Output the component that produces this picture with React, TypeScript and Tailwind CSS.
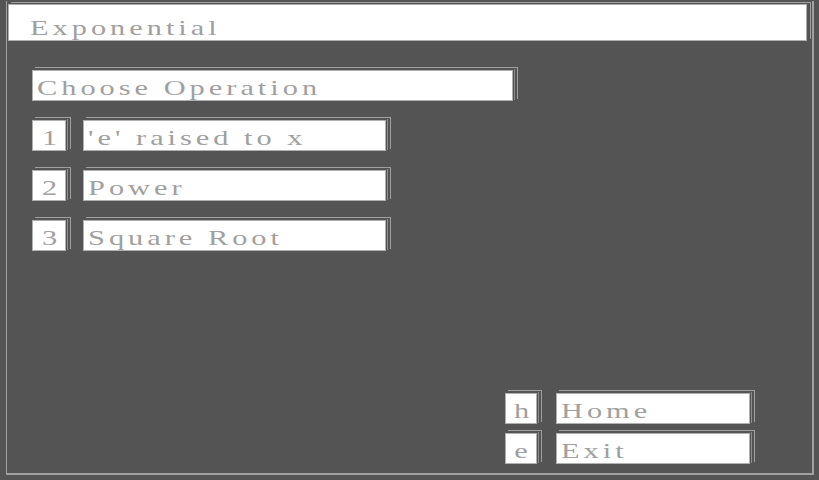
import { ReactNode } from "react";

type BoxProps = {
  children: ReactNode;
  size: string;
  center?: boolean;
};

// wide, spaced-out lettering like the old terminal font
function Label({ children, center }: { children: ReactNode; center?: boolean }) {
  return (
    <span
      className={`inline-block scale-x-[1.38] ${center ? "origin-center" : "origin-left tracking-[2.9px]"}`}
    >
      {children}
    </span>
  );
}

// white panel with the little 3d lip on top and right
function Bevel({ children, size, center }: BoxProps) {
  return (
    <div className={`relative shrink-0 ${size}`}>
      <div className="absolute -top-[3px] left-[3px] -right-[5px] bottom-[2px] border-t border-r border-[#a0a0a0]" />
      <div className="absolute -top-[1px] left-[1px] -right-[2px] bottom-[1px] border-r border-[#8c8c8c]" />
      <div
        className={`relative h-full overflow-hidden whitespace-pre border border-[#b0b0b0] bg-white pt-[4px] text-[22px] leading-[26px] text-[#a0a0a0] ${center ? "text-center" : "pl-[4px]"}`}
      >
        <Label center={center}>{children}</Label>
      </div>
    </div>
  );
}

const operations = [
  { key: "1", label: "'e' raised to x" },
  { key: "2", label: "Power" },
  { key: "3", label: "Square Root" },
];

const navKeys = [
  { key: "h", label: "Home" },
  { key: "e", label: "Exit" },
];

export default function App() {
  return (
    <div
      className="h-[480px] w-[819px] overflow-hidden bg-[#545454] pt-[1px]"
      style={{ fontFamily: '"Liberation Serif", "Times New Roman", serif' }}
    >
      <div className="ml-[6px] flex h-[474px] w-[808px] flex-col border-r-2 border-b-2 border-l border-[#a0a0a0]">
        <div className="relative ml-[1px] mt-[3px] h-[37px] w-[799px]">
          <div className="absolute -top-[2px] left-[3px] -right-[4px] bottom-[2px] border-t border-r border-[#a0a0a0]" />
          <div className="relative h-full whitespace-pre border border-[#b0b0b0] bg-white pl-[21px] pt-[10px] text-[22px] leading-[26px] text-[#a0a0a0]">
            <Label>Exponential</Label>
          </div>
        </div>

        <div className="ml-[25px] mt-[29px] flex flex-col gap-[19px]">
          <Bevel size="h-[31px] w-[481px]">Choose Operation</Bevel>
          {operations.map((op) => (
            <div key={op.key} className="flex gap-[17px]">
              <Bevel size="h-[31px] w-[34px]" center>
                {op.key}
              </Bevel>
              <Bevel size="h-[31px] w-[303px]">{op.label}</Bevel>
            </div>
          ))}
        </div>

        <div className="mb-[9px] ml-[498px] mt-auto flex flex-col gap-[9px]">
          {navKeys.map((n) => (
            <div key={n.key} className="flex gap-[19px]">
              <Bevel size="h-[31px] w-[32px]" center>
                {n.key}
              </Bevel>
              <Bevel size="h-[31px] w-[194px]">{n.label}</Bevel>
            </div>
          ))}
        </div>
      </div>
    </div>
  );
}
